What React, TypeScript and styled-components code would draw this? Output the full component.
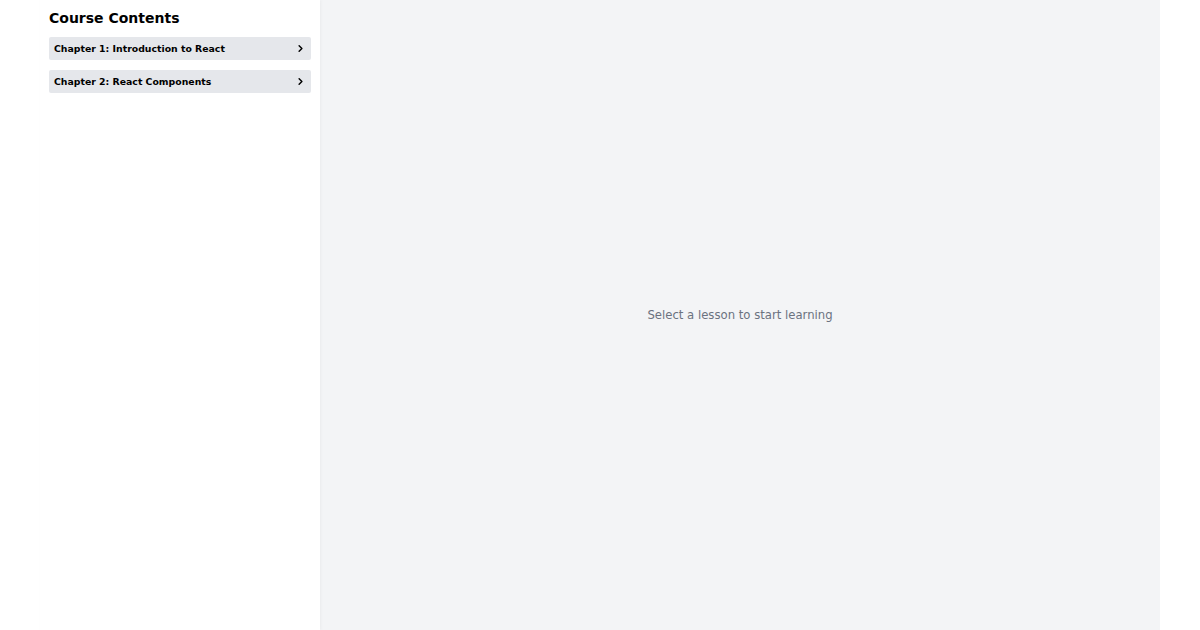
import React from "react";
import styled, { createGlobalStyle } from "styled-components";
import { ChevronRight } from "lucide-react";

const GlobalStyle = createGlobalStyle`
  html, body {
    margin: 0;
    padding: 0;
    background: #ffffff;
    font-family: "DejaVu Sans", "Liberation Sans", sans-serif;
  }
`;

const Layout = styled.div`
  display: flex;
  width: 1120px;
  height: 630px;
  margin: 0 auto;
`;

const Sidebar = styled.aside`
  width: 262px;
  flex-shrink: 0;
  padding: 0 9px;
  background: #ffffff;
  box-shadow: 1px 0 3px rgba(0, 0, 0, 0.04);
  z-index: 1;
`;

const Title = styled.h2`
  margin: 0;
  padding-top: 10px;
  height: 37px;
  box-sizing: border-box;
  font-size: 14px;
  line-height: 17px;
  font-weight: bold;
  color: #000000;
`;

const ChapterList = styled.div`
  display: flex;
  flex-direction: column;
  gap: 10px;
`;

const ChapterButton = styled.button`
  display: flex;
  justify-content: space-between;
  align-items: center;
  width: 100%;
  height: 23px;
  padding: 0 5px;
  border: none;
  border-radius: 2px;
  background: #e5e7eb;
  color: #000000;
  font-family: "DejaVu Sans", "Liberation Sans", sans-serif;
  font-size: 9.33px;
  font-weight: bold;
  cursor: pointer;
`;

const Main = styled.main`
  flex: 1;
  display: flex;
  justify-content: center;
  align-items: center;
  background: #f3f4f6;
`;

const Placeholder = styled.p`
  margin: 0;
  font-size: 11.67px;
  color: #6b7280;
`;

const chapters = ["Chapter 1: Introduction to React", "Chapter 2: React Components"];

const App = () => {
  return (
    <>
      <GlobalStyle />
      <Layout>
        <Sidebar>
          <Title>Course Contents</Title>
          <ChapterList>
            {chapters.map((item) => (
              <ChapterButton key={item}>
                <span>{item}</span>
                <ChevronRight size={11} strokeWidth={3.2} />
              </ChapterButton>
            ))}
          </ChapterList>
        </Sidebar>
        <Main>
          <Placeholder>Select a lesson to start learning</Placeholder>
        </Main>
      </Layout>
    </>
  );
};

export default App;
